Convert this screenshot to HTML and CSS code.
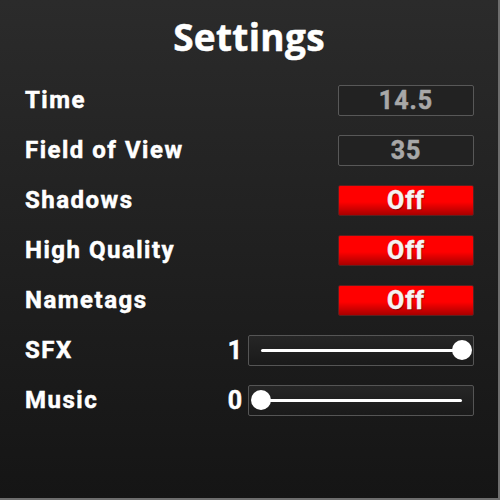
FILE: index.html
```html
<!DOCTYPE html>
<html>
<head>
<meta charset="utf-8">
<link rel="stylesheet" href="styles.css">
</head>
<body>
<div class="panel">
  <h1 class="title">Settings</h1>
  <div class="rows">
    <div class="row">
      <span class="label">Time</span>
      <div class="box field">14.5</div>
    </div>
    <div class="row">
      <span class="label">Field of View</span>
      <div class="box field">35</div>
    </div>
    <div class="row">
      <span class="label">Shadows</span>
      <div class="box toggle">Off</div>
    </div>
    <div class="row">
      <span class="label">High Quality</span>
      <div class="box toggle">Off</div>
    </div>
    <div class="row">
      <span class="label">Nametags</span>
      <div class="box toggle">Off</div>
    </div>
    <div class="row">
      <span class="label">SFX</span>
      <div class="slider-group">
        <span class="value">1</span>
        <div class="slider">
          <div class="track"><span class="knob knob-end"></span></div>
        </div>
      </div>
    </div>
    <div class="row">
      <span class="label">Music</span>
      <div class="slider-group">
        <span class="value">0</span>
        <div class="slider">
          <div class="track"><span class="knob knob-start"></span></div>
        </div>
      </div>
    </div>
  </div>
</div>
</body>
</html>
```
FILE: styles.css
```css
html, body {
  margin: 0;
  padding: 0;
  background: #6e6e6e;
  width: 500px;
  height: 500px;
  overflow: hidden;
}
.panel {
  width: 498px;
  height: 498px;
  background: linear-gradient(to bottom, #2b2b2b 0%, #151515 100%);
  font-family: Roboto, "Liberation Sans", sans-serif;
  color: #fff;
  box-sizing: border-box;
  padding: 0 25px 0 25px;
}
.title {
  margin: 0;
  padding-top: 14px;
  height: 65px;
  box-sizing: border-box;
  text-align: center;
  font-family: "Open Sans", "Liberation Sans", sans-serif;
  font-weight: 700;
  font-size: 37px;
  line-height: 46px;
  letter-spacing: 0.3px;
  -webkit-text-stroke: 0.5px #fff;
}
.rows {
  display: flex;
  flex-direction: column;
  padding-top: 10px;
}
.row {
  height: 50px;
  display: flex;
  align-items: center;
  justify-content: space-between;
}
.label {
  font-size: 24px;
  font-weight: 700;
  letter-spacing: 1.5px;
  -webkit-text-stroke: 0.5px #fff;
}
.box {
  width: 136px;
  height: 31px;
  box-sizing: border-box;
  border-radius: 2px;
  display: flex;
  align-items: center;
  justify-content: center;
  font-size: 25px;
  font-weight: 700;
  letter-spacing: 1px;
  margin-right: -1px;
}
.field {
  border: 1px solid #585858;
  background: #222;
  color: #a8a8a8;
  -webkit-text-stroke: 0.5px #a8a8a8;
}
.toggle {
  border: 1px solid #5a2020;
  background: linear-gradient(to bottom, #ff0000 0%, #ff0000 55%, #a80000 100%);
  color: #f4f4f4;
  -webkit-text-stroke: 0.5px #f4f4f4;
  text-shadow: 1px 1px 1px rgba(0,0,0,0.45);
}
.slider-group {
  display: flex;
  align-items: center;
  gap: 5px;
  margin-right: -1px;
}
.value {
  font-size: 25px;
  font-weight: 700;
  letter-spacing: 1px;
  -webkit-text-stroke: 0.5px #fff;
}
.slider {
  width: 226px;
  height: 31px;
  box-sizing: border-box;
  border: 1px solid #555;
  border-radius: 2px;
  background: linear-gradient(to bottom, #262626, #1a1a1a);
  display: flex;
  align-items: center;
  padding: 0 11px 0 12px;
}
.track {
  position: relative;
  flex: 1;
  height: 3px;
  background: #fff;
  border-radius: 2px;
}
.knob {
  position: absolute;
  top: 50%;
  width: 20px;
  height: 20px;
  margin-top: -10px;
  border-radius: 50%;
  background: #fff;
}
.knob-end { right: -10px; }
.knob-start { left: -10px; }
```
